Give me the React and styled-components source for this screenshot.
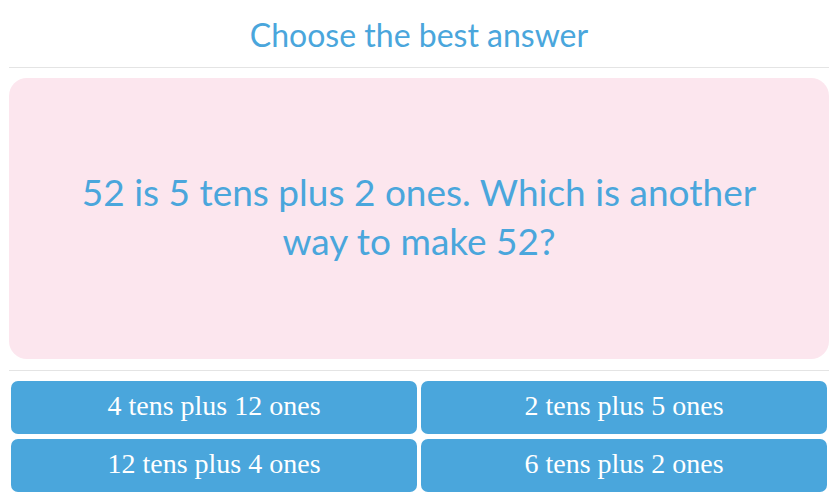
import React from 'react';
import styled, { createGlobalStyle } from 'styled-components';

const GlobalStyle = createGlobalStyle`
    html, body {
        margin: 0;
        padding: 0;
        background: #ffffff;
    }
`;

const Page = styled.div`
    width: 820px;
    padding: 0 11px 0 9px;
    font-family: Lato, 'Open Sans', sans-serif;
`;

const Title = styled.h1`
    margin: 0;
    height: 68px;
    display: flex;
    align-items: center;
    justify-content: center;
    font-size: 32px;
    font-weight: 400;
    color: #4aa6dc;
    border-bottom: 1px solid #e4e4e4;
    padding-top: 2px;
    box-sizing: border-box;
`;

const Question = styled.div`
    margin-top: 10px;
    height: 281px;
    border-radius: 18px;
    background: #fce6ee;
    display: flex;
    align-items: center;
    justify-content: center;
    text-align: center;
    padding: 0 66px 5px;
    box-sizing: border-box;
    font-size: 37px;
    line-height: 49px;
    color: #4aa6dc;
`;

const Divider = styled.hr`
    margin: 11px 0 0;
    border: 0;
    border-top: 1px solid #e4e4e4;
`;

const Answers = styled.div`
    display: grid;
    grid-template-columns: 406px 406px;
    column-gap: 4px;
    row-gap: 5px;
    padding: 10px 2px 0;
`;

const Answer = styled.button`
    height: 53px;
    border: 0;
    border-radius: 7px;
    background: #4aa6dc;
    color: #ffffff;
    font-family: 'Liberation Serif', 'Times New Roman', serif;
    font-size: 28px;
    padding: 0 0 3px;
    cursor: pointer;
`;

const answers = [
    '4 tens plus 12 ones',
    '2 tens plus 5 ones',
    '12 tens plus 4 ones',
    '6 tens plus 2 ones',
];

export default function App() {
    return (
        <>
            <GlobalStyle />
            <Page>
                <Title>Choose the best answer</Title>
                <Question>52 is 5 tens plus 2 ones. Which is another way to make 52?</Question>
                <Divider />
                <Answers>
                    {answers.map((a) => (
                        <Answer key={a}>{a}</Answer>
                    ))}
                </Answers>
            </Page>
        </>
    );
}
